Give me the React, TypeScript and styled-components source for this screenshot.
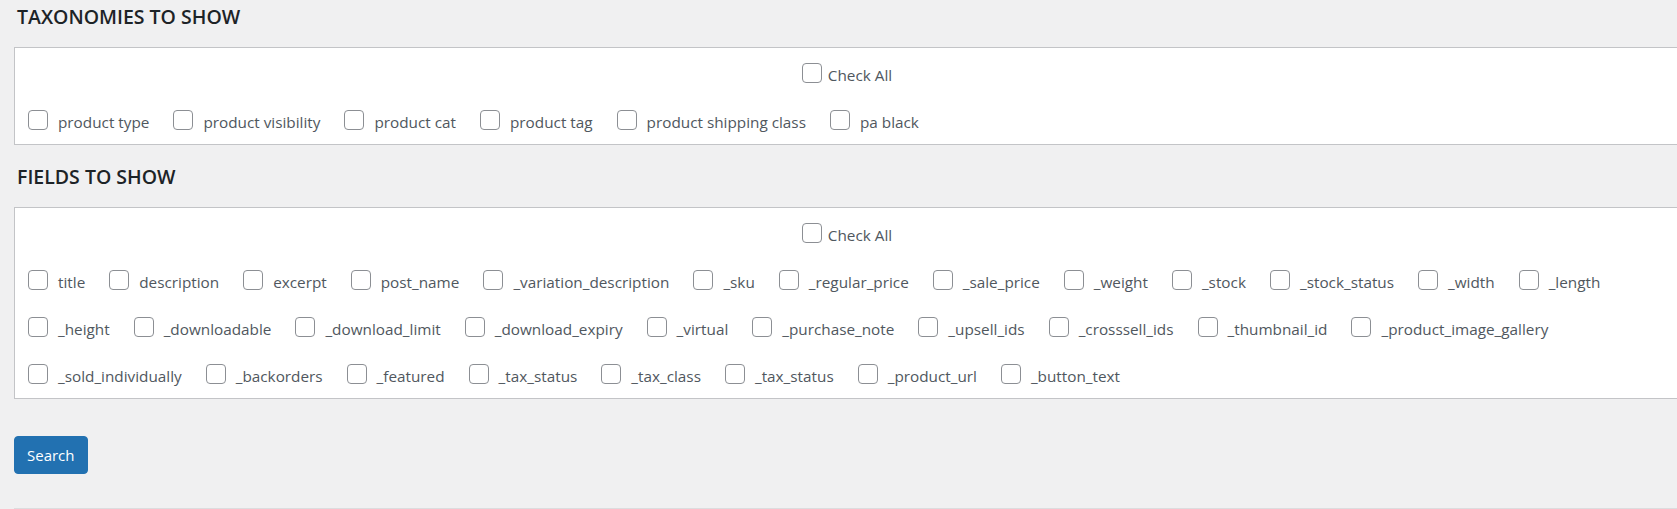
import React from 'react'
import styled, { createGlobalStyle } from 'styled-components'

const GlobalStyle = createGlobalStyle`
  html, body {
    margin: 0;
    padding: 0;
    background: #f0f0f1;
    overflow: hidden;
  }
  body {
    font-family: 'Open Sans', 'Noto Sans', sans-serif;
    color: #50575e;
  }
`

const taxonomies = [
  'product type',
  'product visibility',
  'product cat',
  'product tag',
  'product shipping class',
  'pa black',
]

const fieldRows = [
  [
    'title',
    'description',
    'excerpt',
    'post_name',
    '_variation_description',
    '_sku',
    '_regular_price',
    '_sale_price',
    '_weight',
    '_stock',
    '_stock_status',
    '_width',
    '_length',
  ],
  [
    '_height',
    '_downloadable',
    '_download_limit',
    '_download_expiry',
    '_virtual',
    '_purchase_note',
    '_upsell_ids',
    '_crosssell_ids',
    '_thumbnail_id',
    '_product_image_gallery',
  ],
  [
    '_sold_individually',
    '_backorders',
    '_featured',
    '_tax_status',
    '_tax_class',
    '_tax_status',
    '_product_url',
    '_button_text',
  ],
]

const Page = styled.div`
  width: 1666px;
  padding: 3px 0 0 14px;
`

const SectionTitle = styled.h2`
  margin: 0 0 16px 3px;
  font-size: 19.5px;
  line-height: 28px;
  font-weight: 600;
  color: #1d2327;
`

const Panel = styled.div`
  background: #fff;
  border: 1px solid #c3c4c7;
  padding: 15px 13px 14px;
  display: flex;
  flex-direction: column;
  gap: 27px;
  margin-bottom: 18px;
`

const CheckAllRow = styled.div`
  display: flex;
  justify-content: center;
`

const Row = styled.div`
  display: flex;
  align-items: center;
  gap: 24px;
`

const Option = styled.label<{ $gap?: number }>`
  display: inline-flex;
  align-items: center;
  gap: ${({ $gap }) => $gap ?? 10}px;
  height: 20px;
  font-size: 15.3px;
  line-height: 20px;
  white-space: nowrap;
  cursor: pointer;
`

const Box = styled.input.attrs({ type: 'checkbox' })`
  appearance: none;
  margin: 0;
  width: 20px;
  height: 20px;
  flex: none;
  background: #fff;
  border: 1px solid #8c8f94;
  border-radius: 4px;
`

const Text = styled.span`
  margin: 2px 0 -2px;
`

const SearchButton = styled.button`
  margin-top: 19px;
  height: 38px;
  padding: 0 12px;
  background: #2271b1;
  border: 1px solid #2271b1;
  border-radius: 4px;
  color: #fff;
  font-family: 'Open Sans', 'Noto Sans', sans-serif;
  font-size: 15px;
  line-height: 1;
  cursor: pointer;
`

const Divider = styled.hr`
  margin: 34px 0 0;
  border: 0;
  border-top: 1px solid #dcdcde;
`

function CheckOption({ label, gap }: { label: string; gap?: number }) {
  return (
    <Option $gap={gap}>
      <Box />
      <Text>{label}</Text>
    </Option>
  )
}

export default function App() {
  return (
    <>
      <GlobalStyle />
      <Page>
        <SectionTitle>TAXONOMIES TO SHOW</SectionTitle>
        <Panel>
          <CheckAllRow>
            <CheckOption label="Check All" gap={6} />
          </CheckAllRow>
          <Row>
            {taxonomies.map((t) => (
              <CheckOption key={t} label={t} />
            ))}
          </Row>
        </Panel>

        <SectionTitle>FIELDS TO SHOW</SectionTitle>
        <Panel>
          <CheckAllRow>
            <CheckOption label="Check All" gap={6} />
          </CheckAllRow>
          {fieldRows.map((row, i) => (
            <Row key={i}>
              {row.map((f, j) => (
                <CheckOption key={j} label={f} />
              ))}
            </Row>
          ))}
        </Panel>

        <SearchButton>Search</SearchButton>
        <Divider />
      </Page>
    </>
  )
}
